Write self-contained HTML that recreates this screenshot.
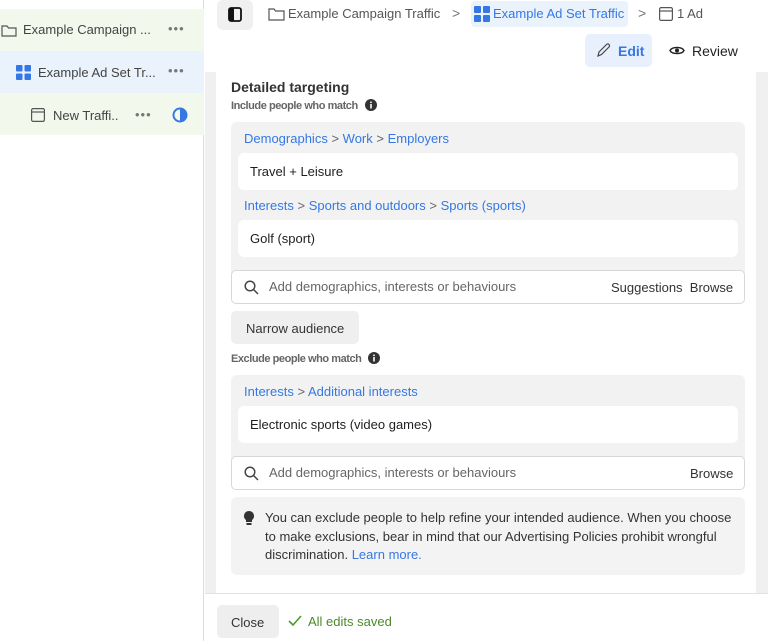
<!DOCTYPE html>
<html><head><meta charset="utf-8"><style>
*{box-sizing:border-box;margin:0;padding:0}
body{width:768px;height:641px;overflow:hidden;background:#fff;font-family:"Liberation Sans",Arial,sans-serif;color:#1c1e21;position:relative;font-size:13px}
.abs{position:absolute}
.blue{color:#3578e5}
.side{left:0;top:0;width:204px;height:641px;border-right:1px solid #dcdcdc;background:#fff}
.row{position:absolute;left:0;width:204px;height:42px;display:flex;align-items:center;font-size:13px;color:#444}
.dots{position:absolute;color:#777;font-size:13px;letter-spacing:1px}
.grp{background:#f2f2f2;border-radius:6px}
.wb{background:#fff;border-radius:6px;position:absolute;left:7px;right:7px;height:37px;display:flex;align-items:center;padding-left:12px;font-size:13px}
.srch{background:#fff;border:1px solid #d8d8d8;border-radius:5px;height:34px;display:flex;align-items:center;font-size:13px;color:#555}
.lbl{font-size:11px;font-weight:bold;color:#666;letter-spacing:-0.45px}
</style></head><body>
<div class="abs side">
 <div class="row" style="top:9px;background:#f3f8ec">
  <svg class="abs" style="left:1px;top:15px" width="16" height="13" viewBox="0 0 16 13"><path d="M1 2h5l1.5 2H15v8H1z" fill="none" stroke="#555" stroke-width="1.2"/></svg>
  <span class="abs" style="left:23px;top:13px">Example Campaign ...</span><span class="dots" style="left:168px;top:12px">•••</span></div>
 <div class="row" style="top:51px;background:#eaf2fc">
  <svg class="abs" style="left:16px;top:14px" width="15" height="15"><rect x="0" y="0" width="6.5" height="6.5" rx="1" fill="#3578e5"/><rect x="8.5" y="0" width="6.5" height="6.5" rx="1" fill="#3578e5"/><rect x="0" y="8.5" width="6.5" height="6.5" rx="1" fill="#3578e5"/><rect x="8.5" y="8.5" width="6.5" height="6.5" rx="1" fill="#3578e5"/></svg>
  <span class="abs" style="left:38px;top:14px">Example Ad Set Tr...</span><span class="dots" style="left:168px;top:12px">•••</span></div>
 <div class="row" style="top:93px;background:#f3f8ec">
  <svg class="abs" style="left:31px;top:15px" width="14" height="14"><rect x=".6" y=".6" width="12.8" height="12.8" rx="1.5" fill="none" stroke="#555" stroke-width="1.2"/><line x1="1" y1="4" x2="13" y2="4" stroke="#555" stroke-width="1.2"/></svg>
  <span class="abs" style="left:53px;top:15px">New Traffi..</span><span class="dots" style="left:135px;top:14px">•••</span>
  <svg class="abs" style="left:172px;top:14px" width="16" height="16"><circle cx="8" cy="8" r="6.5" fill="none" stroke="#3578e5" stroke-width="2"/><path d="M8 1.5a6.5 6.5 0 0 1 0 13z" fill="#3578e5"/></svg></div>
</div>
<div class="abs" style="left:205px;top:72px;width:563px;height:521px;background:#f0f0f0"></div>
<div class="abs" style="left:216px;top:72px;width:540px;height:521px;background:#fff"></div>
<!-- header -->
<div class="abs" style="left:217px;top:0;width:36px;height:30px;background:#f0f0f0;border-radius:6px"></div>
<svg class="abs" style="left:228px;top:7px" width="14" height="15"><rect x="1" y="1" width="12" height="13" rx="2" fill="none" stroke="#111" stroke-width="1.8"/><rect x="1" y="1" width="5" height="13" fill="#111"/></svg>
<svg class="abs" style="left:268px;top:7px" width="17" height="14"><path d="M1 2h5l1.5 2H16v9H1z" fill="none" stroke="#555" stroke-width="1.2"/></svg>
<span class="abs" style="left:288px;top:6px;font-size:13px;color:#555">Example Campaign Traffic</span>
<span class="abs" style="left:452px;top:5px;font-size:14px;color:#777">&gt;</span>
<div class="abs" style="left:471px;top:1px;width:157px;height:26px;background:#eaf2fc;border-radius:4px"></div>
<svg class="abs" style="left:474px;top:6px" width="16" height="16"><rect x="0" y="0" width="7" height="7" rx="1" fill="#3578e5"/><rect x="9" y="0" width="7" height="7" rx="1" fill="#3578e5"/><rect x="0" y="9" width="7" height="7" rx="1" fill="#3578e5"/><rect x="9" y="9" width="7" height="7" rx="1" fill="#3578e5"/></svg>
<span class="abs blue" style="left:493px;top:6px;font-size:13px">Example Ad Set Traffic</span>
<span class="abs" style="left:638px;top:5px;font-size:14px;color:#777">&gt;</span>
<svg class="abs" style="left:659px;top:7px" width="14" height="14"><rect x=".6" y=".6" width="12.8" height="12.8" rx="1.5" fill="none" stroke="#555" stroke-width="1.2"/><line x1="1" y1="4" x2="13" y2="4" stroke="#555" stroke-width="1.2"/></svg>
<span class="abs" style="left:677px;top:6px;font-size:13px;color:#555">1 Ad</span>
<div class="abs" style="left:585px;top:34px;width:67px;height:33px;background:#e7f0fc;border-radius:5px"></div>
<svg class="abs" style="left:596px;top:43px" width="15" height="15"><path d="M2 13l1-4 7.5-7.5a1.5 1.5 0 0 1 2.5 2.5L5.5 11.5z" fill="none" stroke="#444" stroke-width="1.2"/></svg>
<span class="abs blue" style="left:618px;top:43px;font-size:14px;font-weight:bold">Edit</span>
<svg class="abs" style="left:669px;top:45px" width="16" height="11"><path d="M1 5.5C3 1.5 13 1.5 15 5.5 13 9.5 3 9.5 1 5.5z" fill="none" stroke="#222" stroke-width="1.4"/><circle cx="8" cy="5.5" r="2" fill="#222"/></svg>
<span class="abs" style="left:692px;top:43px;font-size:14px;color:#222">Review</span>
<!-- content -->
<div class="abs" style="left:231px;top:79px;font-size:14px;font-weight:bold;color:#333">Detailed targeting</div>
<div class="abs lbl" style="left:231px;top:100px">Include people who match</div>
<svg class="abs" style="left:365px;top:99px" width="12" height="12"><circle cx="6" cy="6" r="6" fill="#333"/><rect x="5.2" y="5" width="1.6" height="4.5" fill="#fff"/><circle cx="6" cy="3.3" r=".9" fill="#fff"/></svg>
<div class="abs grp" style="left:231px;top:122px;width:514px;height:160px">
 <div class="abs" style="left:13px;top:9px;font-size:13px;color:#666"><span class="blue">Demographics</span> &gt; <span class="blue">Work</span> &gt; <span class="blue">Employers</span></div>
 <div class="wb" style="top:31px">Travel + Leisure</div>
 <div class="abs" style="left:13px;top:76px;font-size:13px;color:#666"><span class="blue">Interests</span> &gt; <span class="blue">Sports and outdoors</span> &gt; <span class="blue">Sports (sports)</span></div>
 <div class="wb" style="top:98px">Golf (sport)</div>
</div>
<div class="abs srch" style="left:231px;top:270px;width:514px">
 <svg class="abs" style="left:12px;top:9px" width="15" height="15"><circle cx="6" cy="6" r="4.8" fill="none" stroke="#444" stroke-width="1.5"/><line x1="9.5" y1="9.5" x2="14" y2="14" stroke="#444" stroke-width="1.5"/></svg>
 <span class="abs" style="left:37px;top:8px;color:#666">Add demographics, interests or behaviours</span>
 <span class="abs" style="left:379px;top:9px;color:#333">Suggestions&nbsp; Browse</span></div>
<div class="abs" style="left:231px;top:311px;width:128px;height:33px;background:#efefef;border-radius:5px;font-size:13px;padding:10px 0 0 15px;color:#333">Narrow audience</div>
<div class="abs lbl" style="left:231px;top:353px">Exclude people who match</div>
<svg class="abs" style="left:368px;top:352px" width="12" height="12"><circle cx="6" cy="6" r="6" fill="#333"/><rect x="5.2" y="5" width="1.6" height="4.5" fill="#fff"/><circle cx="6" cy="3.3" r=".9" fill="#fff"/></svg>
<div class="abs grp" style="left:231px;top:375px;width:514px;height:95px">
 <div class="abs" style="left:13px;top:9px;font-size:13px;color:#666"><span class="blue">Interests</span> &gt; <span class="blue">Additional interests</span></div>
 <div class="wb" style="top:31px">Electronic sports (video games)</div>
</div>
<div class="abs srch" style="left:231px;top:456px;width:514px">
 <svg class="abs" style="left:12px;top:9px" width="15" height="15"><circle cx="6" cy="6" r="4.8" fill="none" stroke="#444" stroke-width="1.5"/><line x1="9.5" y1="9.5" x2="14" y2="14" stroke="#444" stroke-width="1.5"/></svg>
 <span class="abs" style="left:37px;top:8px;color:#666">Add demographics, interests or behaviours</span>
 <span class="abs" style="left:458px;top:9px;color:#333">Browse</span></div>
<div class="abs" style="left:231px;top:497px;width:514px;height:78px;background:#f3f3f3;border-radius:6px"></div>
<svg class="abs" style="left:243px;top:510px" width="12" height="16"><path d="M6 1a5 5 0 0 0-3 9v2h6v-2a5 5 0 0 0-3-9z" fill="#333"/><rect x="3.5" y="13" width="5" height="2" fill="#333"/></svg>
<div class="abs" style="left:265px;top:509px;width:470px;font-size:13px;line-height:18.5px;color:#333">You can exclude people to help refine your intended audience. When you choose to make exclusions, bear in mind that our Advertising Policies prohibit wrongful discrimination. <span class="blue">Learn more.</span></div>
<!-- footer -->
<div class="abs" style="left:205px;top:593px;width:563px;height:48px;background:#fff;border-top:1px solid #e3e3e3"></div>
<div class="abs" style="left:217px;top:605px;width:62px;height:33px;background:#eeeeee;border-radius:5px;font-size:13px;color:#333;padding:10px 0 0 14px">Close</div>
<svg class="abs" style="left:288px;top:615px" width="14" height="12"><path d="M1 6l4 4 8-9" fill="none" stroke="#4a9a2a" stroke-width="1.6"/></svg>
<span class="abs" style="left:308px;top:614px;font-size:13px;color:#4a8a2a">All edits saved</span>
</body></html>
